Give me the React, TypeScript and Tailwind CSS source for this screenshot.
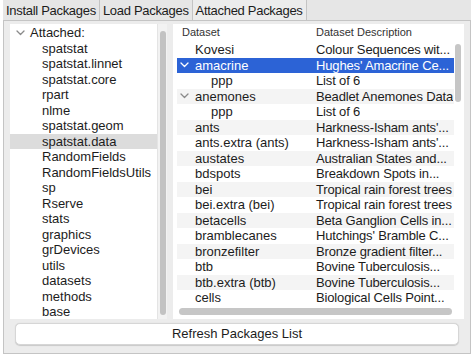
import React from 'react'

const attached = [
  'spatstat',
  'spatstat.linnet',
  'spatstat.core',
  'rpart',
  'nlme',
  'spatstat.geom',
  'spatstat.data',
  'RandomFields',
  'RandomFieldsUtils',
  'sp',
  'Rserve',
  'stats',
  'graphics',
  'grDevices',
  'utils',
  'datasets',
  'methods',
  'base',
]

type Row = { name: string; desc: string; level: 0 | 1; open?: boolean; selected?: boolean }

const rows: Row[] = [
  { name: 'Kovesi', desc: 'Colour Sequences wit...', level: 0 },
  { name: 'amacrine', desc: "Hughes' Amacrine Ce...", level: 0, open: true, selected: true },
  { name: 'ppp', desc: 'List of 6', level: 1 },
  { name: 'anemones', desc: 'Beadlet Anemones Data', level: 0, open: true },
  { name: 'ppp', desc: 'List of 6', level: 1 },
  { name: 'ants', desc: "Harkness-Isham ants'...", level: 0 },
  { name: 'ants.extra (ants)', desc: "Harkness-Isham ants'...", level: 0 },
  { name: 'austates', desc: 'Australian States and...', level: 0 },
  { name: 'bdspots', desc: 'Breakdown Spots in...', level: 0 },
  { name: 'bei', desc: 'Tropical rain forest trees', level: 0 },
  { name: 'bei.extra (bei)', desc: 'Tropical rain forest trees', level: 0 },
  { name: 'betacells', desc: 'Beta Ganglion Cells in...', level: 0 },
  { name: 'bramblecanes', desc: "Hutchings' Bramble C...", level: 0 },
  { name: 'bronzefilter', desc: 'Bronze gradient filter...', level: 0 },
  { name: 'btb', desc: 'Bovine Tuberculosis...', level: 0 },
  { name: 'btb.extra (btb)', desc: 'Bovine Tuberculosis...', level: 0 },
  { name: 'cells', desc: 'Biological Cells Point...', level: 0 },
]

function Chevron({ light = false }: { light?: boolean }) {
  return (
    <svg width="9" height="6" viewBox="0 0 9 6" className="shrink-0">
      <path
        d="M1 1 L4.5 4.5 L8 1"
        fill="none"
        stroke={light ? '#ffffff' : '#8a8a8a'}
        strokeWidth="1.3"
        strokeLinecap="round"
        strokeLinejoin="round"
      />
    </svg>
  )
}

const tabs = ['Install Packages', 'Load Packages', 'Attached Packages']

export default function App() {
  return (
    <div
      className="w-[474px] h-[359px] bg-white text-[13px] text-[#1c1c1c] overflow-hidden"
      style={{ fontFamily: '"Liberation Sans", Arial, sans-serif' }}
    >
      {/* tab strip */}
      <div className="flex h-[21px] bg-[#e6e6e6] border-b border-[#c4c4c4] mx-[3px]">
        {tabs.map((t, i) => (
          <div
            key={t}
            className={
              'flex items-center px-[3px] border-r border-[#c4c4c4] leading-none tracking-[-0.3px] ' +
              (i === 2 ? 'bg-[#ececec]' : 'bg-[#e6e6e6]')
            }
          >
            {t}
          </div>
        ))}
      </div>

      {/* panel */}
      <div className="mx-[3px] h-[333px] border-x border-b border-[#c4c4c4] bg-[#ececec] flex flex-col px-[6px] pt-[3px]">
        <div className="flex h-[295px] gap-[6px]">
          {/* attached packages list */}
          <div className="w-[162px] h-full bg-white flex">
            <div className="flex-1 pt-[1px]">
              <div className="flex items-center h-[15.5px] pl-[6px] gap-[5px]">
                <Chevron />
                <span>Attached:</span>
              </div>
              {attached.map((p) => (
                <div
                  key={p}
                  className={
                    'h-[15.5px] flex items-center pl-[32px] ' +
                    (p === 'spatstat.data' ? 'bg-[#dcdcdc]' : '')
                  }
                >
                  {p}
                </div>
              ))}
            </div>
            <div className="w-[10px] bg-[#f2f2f2] border-l border-[#e4e4e4] flex justify-center pt-[7px] pb-[4px]">
              <div className="w-[6px] h-full rounded-full bg-[#c2c2c2]" />
            </div>
          </div>

          {/* datasets table */}
          <div className="flex-1 h-full bg-white flex flex-col pl-[4px] pr-[2px]">
            <div className="flex h-[18px] items-end text-[11px] text-[#333] pb-[2px]">
              <div className="w-[135px] pl-[5px]">Dataset</div>
              <div className="pl-[4px]">Dataset Description</div>
            </div>
            <div className="flex flex-1">
              <div className="w-[277px]">
                {rows.map((r, i) => (
                  <div
                    key={i}
                    className={
                      'flex h-[15.5px] items-center whitespace-nowrap ' +
                      (r.selected ? 'bg-[#2c63d6] text-white' : i % 2 === 1 ? 'bg-[#f4f4f4]' : '')
                    }
                  >
                    <div
                      className={
                        'w-[135px] shrink-0 flex items-center ' +
                        (r.level === 1 ? 'pl-[34px]' : 'pl-[3px]')
                      }
                    >
                      {r.level === 0 && (
                        <div className="w-[15px] flex">
                          {r.open && <Chevron light={r.selected} />}
                        </div>
                      )}
                      <span>{r.name}</span>
                    </div>
                    <div className="pl-[4px] overflow-hidden tracking-[-0.15px]">{r.desc}</div>
                  </div>
                ))}
                <div className="h-[2px]" />
                <div className="h-[7px] ml-[2px] mr-[2px] rounded-full bg-[#c6c6c6]" />
              </div>
              <div className="w-[8px] flex justify-center pt-[2px]">
                <div className="w-[6px] h-[58px] rounded-full bg-[#c6c6c6]" />
              </div>
            </div>
          </div>
        </div>

        {/* refresh button */}
        <div className="mt-[4px] mx-[5px] h-[22px] rounded-[5px] bg-white border border-[#d6d6d6] shadow-[0_0.5px_1px_rgba(0,0,0,0.15)] flex items-center justify-center">
          Refresh Packages List
        </div>
      </div>
    </div>
  )
}
